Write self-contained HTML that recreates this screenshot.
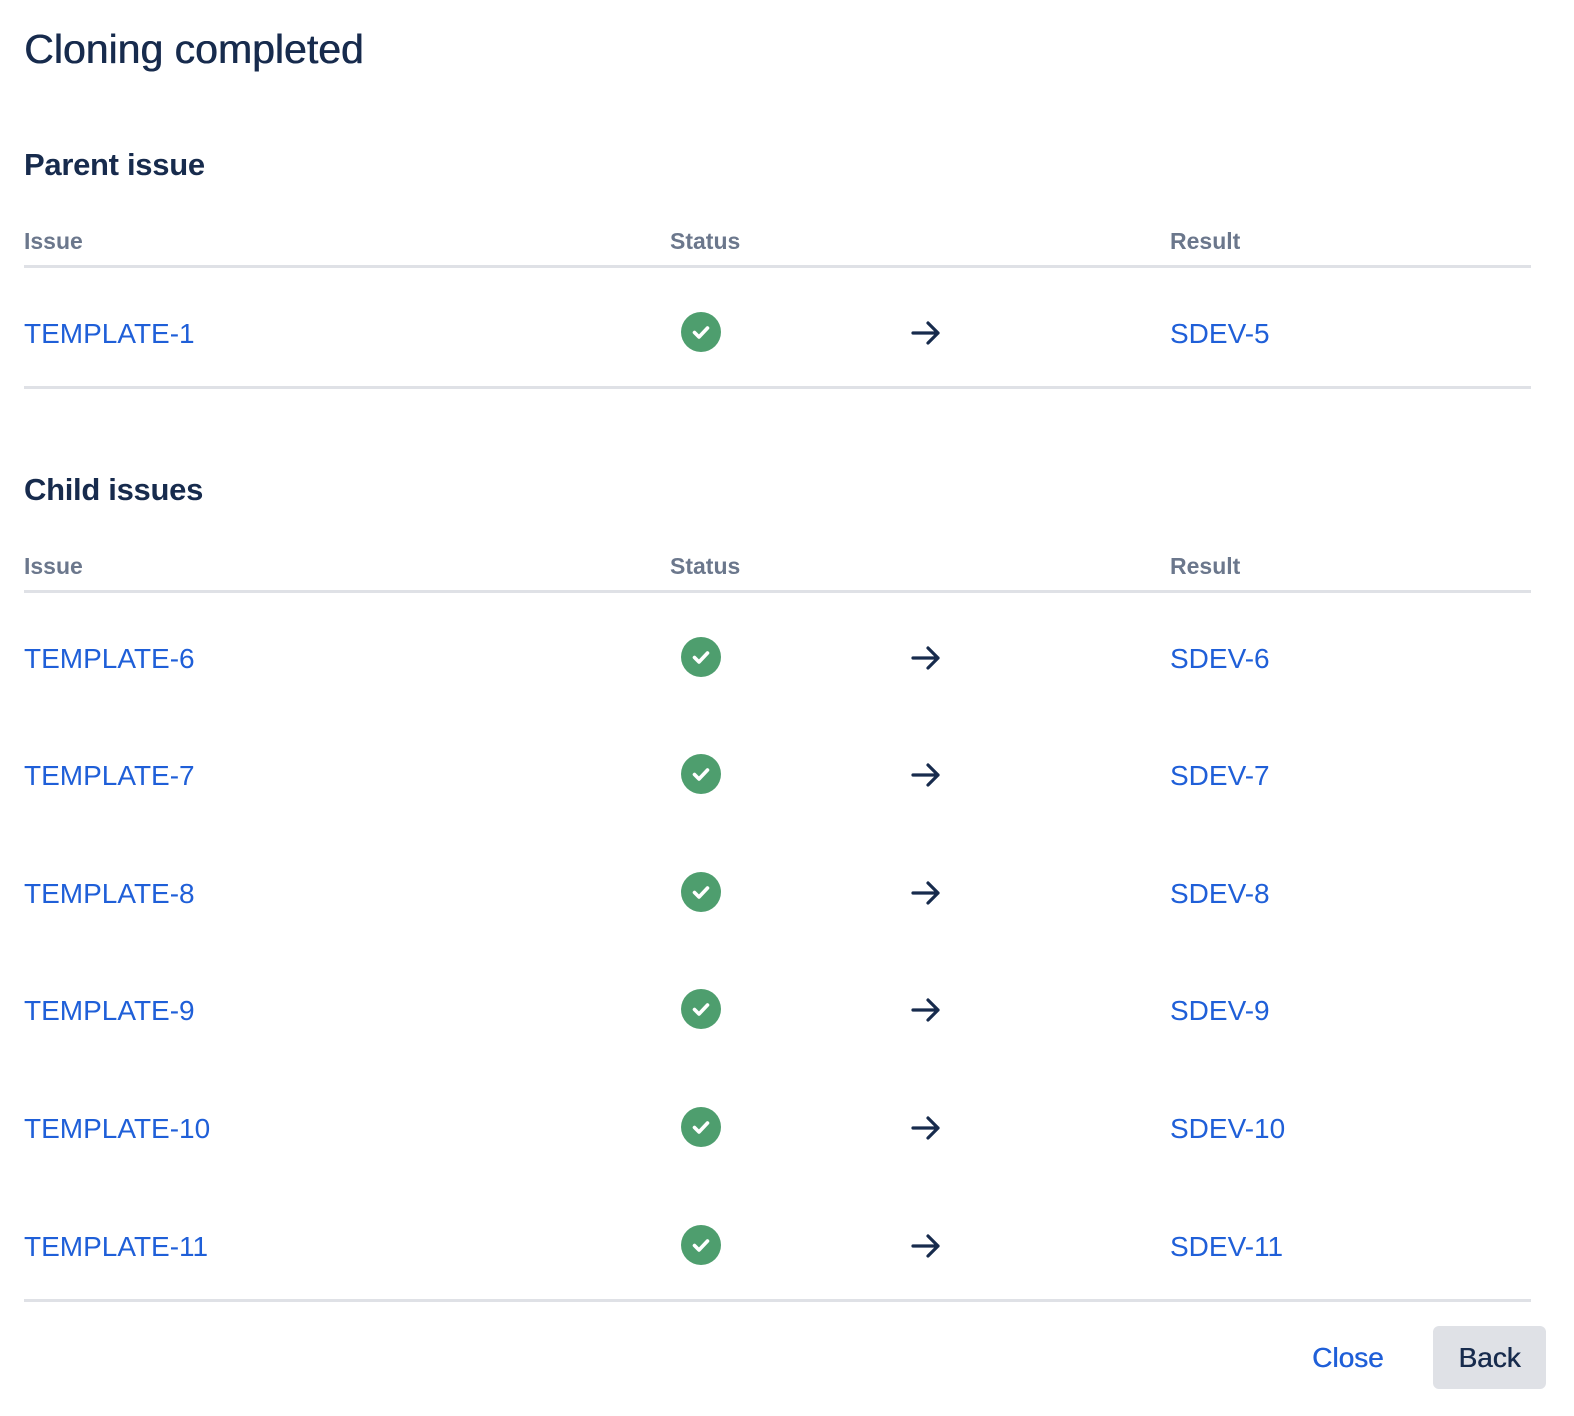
<!DOCTYPE html>
<html><head><meta charset="utf-8"><style>
html,body{margin:0;padding:0;background:#fff;width:1574px;height:1416px;overflow:hidden;font-family:"Liberation Sans",Arial,sans-serif;}
.a{position:absolute;white-space:nowrap}
h1{position:absolute;left:24px;top:26px;margin:0;font-size:41px;font-weight:400;color:#172b4d;text-shadow:0.6px 0 0 #172b4d}
.h2{font-size:31px;font-weight:700;color:#172b4d;letter-spacing:-0.3px}
.th{font-size:23px;font-weight:700;color:#6b778c}
.line{position:absolute;left:24px;width:1507px;height:3px;background:#dfe1e6}
.lk{font-size:28px;color:#1f5fd8;line-height:32px}
.ck{position:absolute;left:681px;width:40px;height:40px}
.ar{position:absolute;left:910px;width:32px;height:32px}
.btn{position:absolute;left:1433px;top:1326px;width:113px;height:63px;background:#dfe1e6;border-radius:6px;font-size:28px;color:#172b4d;text-align:center;line-height:63px;text-shadow:0.5px 0 0 #172b4d}
</style></head><body>
<h1>Cloning completed</h1>
<div class="a h2" style="left:24px;top:147px">Parent issue</div>
<div class="a th" style="left:24px;top:228px">Issue</div>
<div class="a th" style="left:670px;top:228px">Status</div>
<div class="a th" style="left:1170px;top:228px">Result</div>
<div class="line" style="top:265px"></div>
<div class="line" style="top:386px"></div>
<div class="a h2" style="left:24px;top:472px">Child issues</div>
<div class="a th" style="left:24px;top:553px">Issue</div>
<div class="a th" style="left:670px;top:553px">Status</div>
<div class="a th" style="left:1170px;top:553px">Result</div>
<div class="line" style="top:590px"></div>
<div class="line" style="top:1299px"></div>
<div id="rows"></div>
<div class="a lk" style="left:1312px;top:1342px;font-size:28px;text-shadow:0.5px 0 0 #1f5fd8">Close</div>
<div class="btn">Back</div>
<script>
var rows=[["TEMPLATE-1","SDEV-5",333],["TEMPLATE-6","SDEV-6",658],["TEMPLATE-7","SDEV-7",775],["TEMPLATE-8","SDEV-8",893],["TEMPLATE-9","SDEV-9",1010],["TEMPLATE-10","SDEV-10",1128],["TEMPLATE-11","SDEV-11",1246]];
var h="";
rows.forEach(function(r){var c=r[2];
h+='<div class="a lk" style="left:24px;top:'+(c-15)+'px">'+r[0]+'</div>';
h+='<div class="a lk" style="left:1170px;top:'+(c-15)+'px">'+r[1]+'</div>';
h+='<svg class="ck" style="top:'+(c-21)+'px" viewBox="0 0 40 40"><circle cx="20" cy="20" r="20" fill="#4e9e6e"/><path d="M13.5 20.5l4.5 4.5 8.5-9" fill="none" stroke="#fff" stroke-width="3.6" stroke-linecap="round" stroke-linejoin="round"/></svg>';
h+='<svg class="ar" style="top:'+(c-16)+'px" viewBox="0 0 32 32"><path d="M3 16h25M18 6l10 10-10 10" fill="none" stroke="#172b4d" stroke-width="3.2" stroke-linecap="round" stroke-linejoin="round"/></svg>';
});
document.getElementById("rows").innerHTML=h;
</script>
</body></html>
